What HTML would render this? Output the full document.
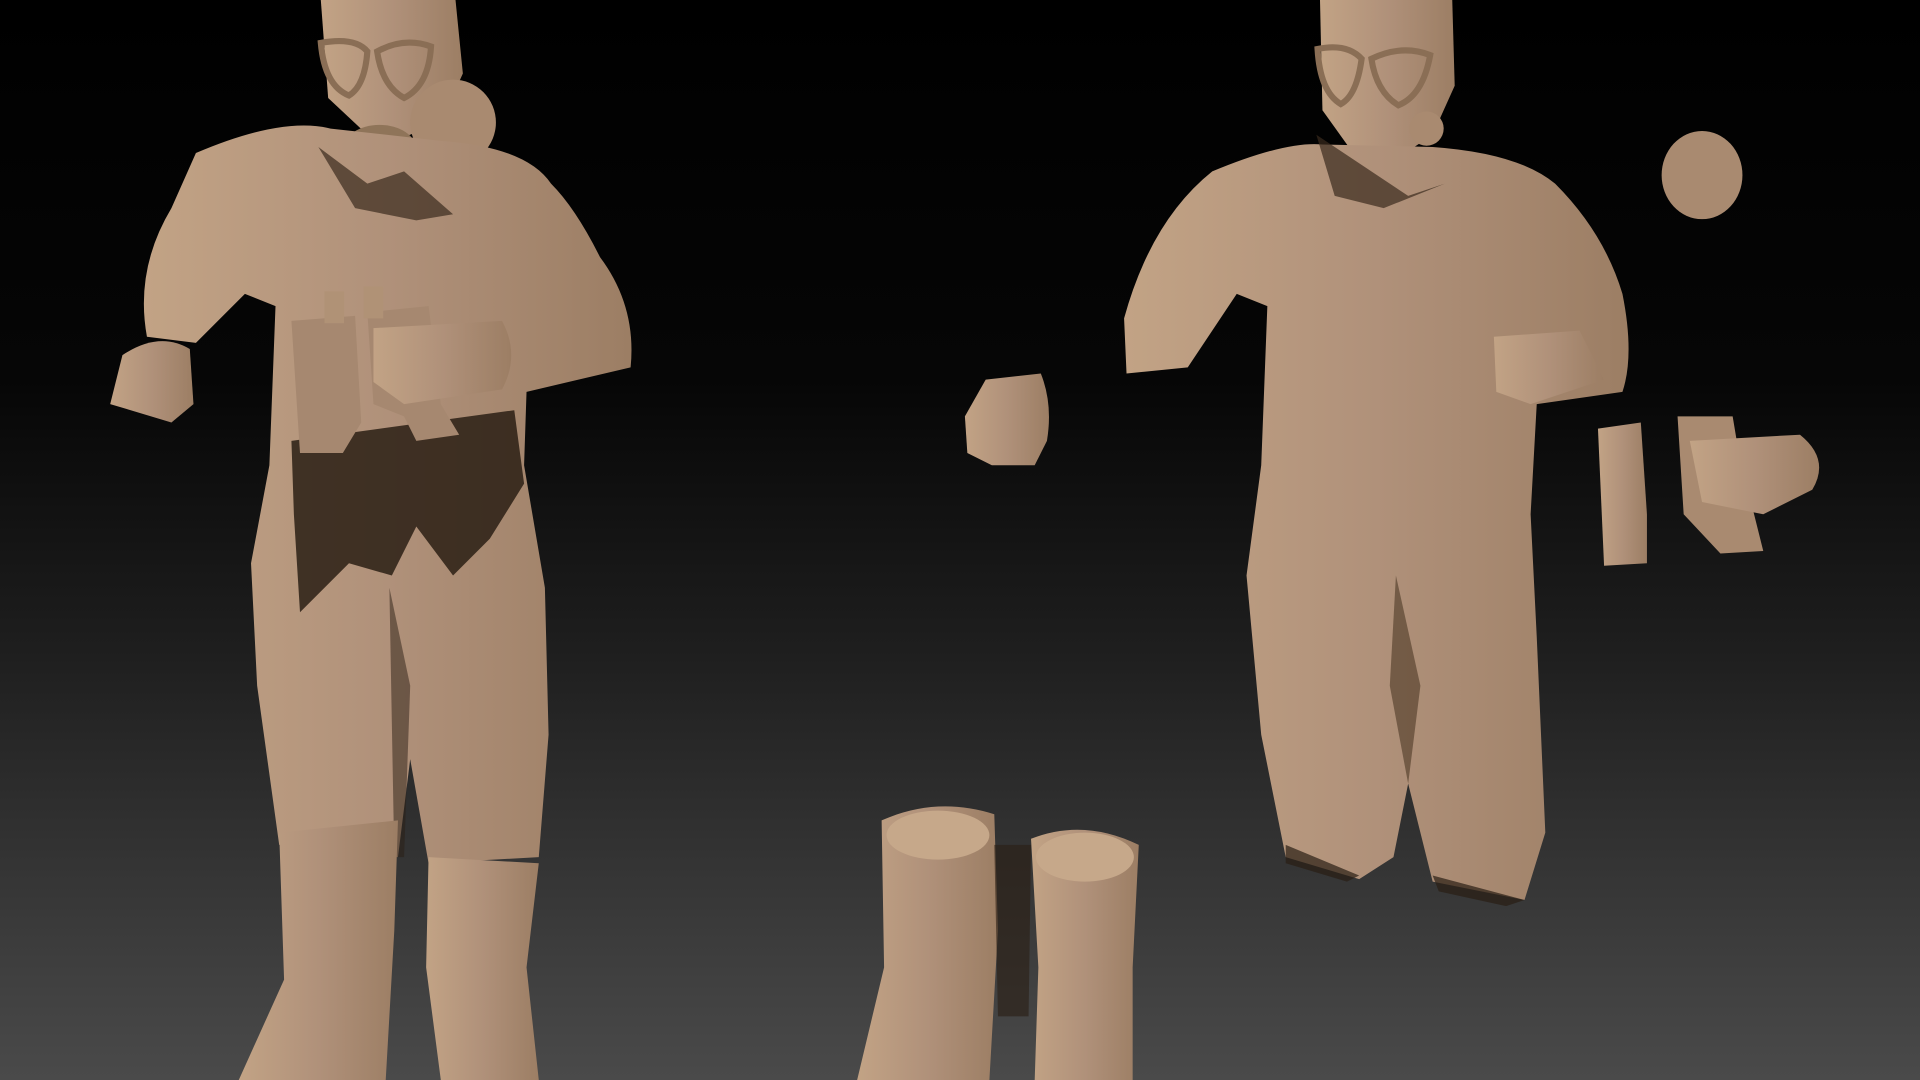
<!DOCTYPE html>
<html><head><meta charset="utf-8"><style>
html,body{margin:0;padding:0;width:1920px;height:1080px;overflow:hidden;background:#000}
svg{display:block}
</style></head><body>
<svg width="1920" height="1080" viewBox="0 0 1568 882" preserveAspectRatio="none" xmlns="http://www.w3.org/2000/svg">
<defs>
<linearGradient id="bg" x1="0" y1="0" x2="0" y2="1">
<stop offset="0" stop-color="#000"/><stop offset="0.35" stop-color="#060606"/><stop offset="0.6" stop-color="#1e1e1e"/><stop offset="1" stop-color="#4a4a4a"/>
</linearGradient>
<linearGradient id="tan" x1="0" y1="0" x2="1" y2="0">
<stop offset="0" stop-color="#c2a385"/><stop offset="0.5" stop-color="#b0917a"/><stop offset="1" stop-color="#9c7e64"/>
</linearGradient>
</defs>
<rect width="1568" height="882" fill="url(#bg)"/>
<g fill="url(#tan)">
<!-- LEFT FIGURE -->
<path d="M262 0 L372 0 L378 60 L360 100 L330 112 L300 110 L268 80 Z"/>
<circle cx="370" cy="100" r="35" fill="#a98a70"/>
<ellipse cx="310" cy="122" rx="30" ry="20" fill="#8f7459"/>
<path d="M160 125 Q230 95 270 105 L360 115 Q430 120 450 150 Q470 170 490 210 Q520 250 515 300 L430 320 L428 380 L445 480 L448 600 L440 700 L350 705 L335 620 L325 700 L228 690 L210 560 L205 460 L220 380 L225 250 L200 240 L160 280 L120 275 Q110 220 140 170 Z"/>
<path d="M100 290 Q130 270 155 285 L158 330 L140 345 L90 330 Z"/>
<path d="M238 360 L420 335 L428 395 L400 440 L370 470 L340 430 L320 470 L285 460 L245 500 L240 420 Z" fill="#2a1e14" opacity="0.85"/>
<path d="M260 120 L300 150 L330 140 L370 175 L340 180 L290 170 Z" fill="#3a2b1e" opacity="0.7"/>
<path d="M318 480 L335 560 L330 700 L322 700 Z" fill="#2a1e14" opacity="0.5"/>
<!-- binoculars left -->
<path d="M238 262 L290 258 L295 345 L280 370 L245 370 Z" fill="#a68870"/>
<path d="M300 255 L350 250 L360 330 L375 355 L340 360 L330 340 L305 330 Z" fill="#a68870"/>
<rect x="265" y="238" width="16" height="26" fill="#b09276"/>
<rect x="297" y="234" width="16" height="26" fill="#b09276"/>
<path d="M305 268 L410 262 Q425 290 410 318 L330 330 L305 312 Z"/>
<path d="M228 680 L325 670 L322 760 L315 882 L195 882 L232 800 Z"/>
<path d="M350 700 L440 705 L430 790 L440 882 L360 882 L348 790 Z"/>
<!-- goggles left -->
<path d="M262 35 Q290 30 300 42 Q298 70 285 78 Q265 70 262 35 Z" fill="none" stroke="#8a6e55" stroke-width="5"/>
<path d="M308 42 Q330 30 352 38 Q350 70 330 80 Q312 70 308 42 Z" fill="none" stroke="#8a6e55" stroke-width="5"/>
<!-- MIDDLE HAND & BOOTS -->
<path d="M805 310 L850 305 Q860 330 855 360 L845 380 L810 380 L790 370 L788 340 Z"/>
<path d="M720 670 Q765 650 812 665 L815 760 L808 882 L700 882 L722 790 Z"/>
<ellipse cx="766" cy="682" rx="42" ry="20" fill="#c6a88a"/>
<path d="M842 685 Q885 668 930 690 L925 790 L925 882 L845 882 L848 790 Z"/>
<ellipse cx="886" cy="700" rx="40" ry="20" fill="#c6a88a"/>
<path d="M812 690 L842 690 L840 830 L815 830 Z" fill="#2a1e14" opacity="0.6"/>
<!-- RIGHT FIGURE -->
<path d="M1078 0 L1186 0 L1188 70 L1170 110 L1140 130 L1105 125 L1080 90 Z"/>
<circle cx="1165" cy="105" r="14" fill="#a98a70"/>
<ellipse cx="1118" cy="138" rx="25" ry="18" fill="#8f7459"/>
<path d="M1076 40 Q1100 35 1112 48 Q1108 78 1095 85 Q1078 75 1076 40 Z" fill="none" stroke="#8a6e55" stroke-width="5"/>
<path d="M1120 48 Q1145 36 1168 45 Q1162 78 1142 86 Q1124 75 1120 48 Z" fill="none" stroke="#8a6e55" stroke-width="5"/>
<path d="M990 140 Q1050 115 1080 118 L1170 120 Q1240 125 1270 150 Q1310 190 1325 240 Q1335 290 1325 320 L1255 330 L1250 420 L1255 520 L1262 680 L1245 735 L1170 720 L1150 640 L1138 700 L1110 718 L1050 700 L1030 600 L1018 470 L1030 380 L1035 250 L1010 240 L970 300 L920 305 L918 260 Q940 180 990 140 Z"/>
<path d="M1220 275 L1290 270 L1310 310 L1250 330 L1222 320 Z"/>
<ellipse cx="1390" cy="143" rx="33" ry="36" fill="#a98a70"/>
<path d="M1305 350 L1340 345 L1345 420 L1345 460 L1310 462 Z"/>
<path d="M1370 340 L1415 340 L1420 370 L1440 450 L1405 452 L1375 420 Z" fill="#a98a70"/>
<path d="M1380 360 L1470 355 Q1495 375 1480 400 L1440 420 L1390 410 Z"/>
<path d="M1075 110 L1150 160 L1180 150 L1130 170 L1090 160 Z" fill="#3a2b1e" opacity="0.7"/>
<path d="M1140 470 L1160 560 L1150 640 L1135 560 Z" fill="#5a4530" opacity="0.7"/>
<path d="M1050 690 L1110 715 L1100 720 L1050 705 Z" fill="#2a1e14" opacity="0.7"/>
<path d="M1170 715 L1245 735 L1230 740 L1175 728 Z" fill="#2a1e14" opacity="0.7"/>
</g>
</svg>
</body></html>
